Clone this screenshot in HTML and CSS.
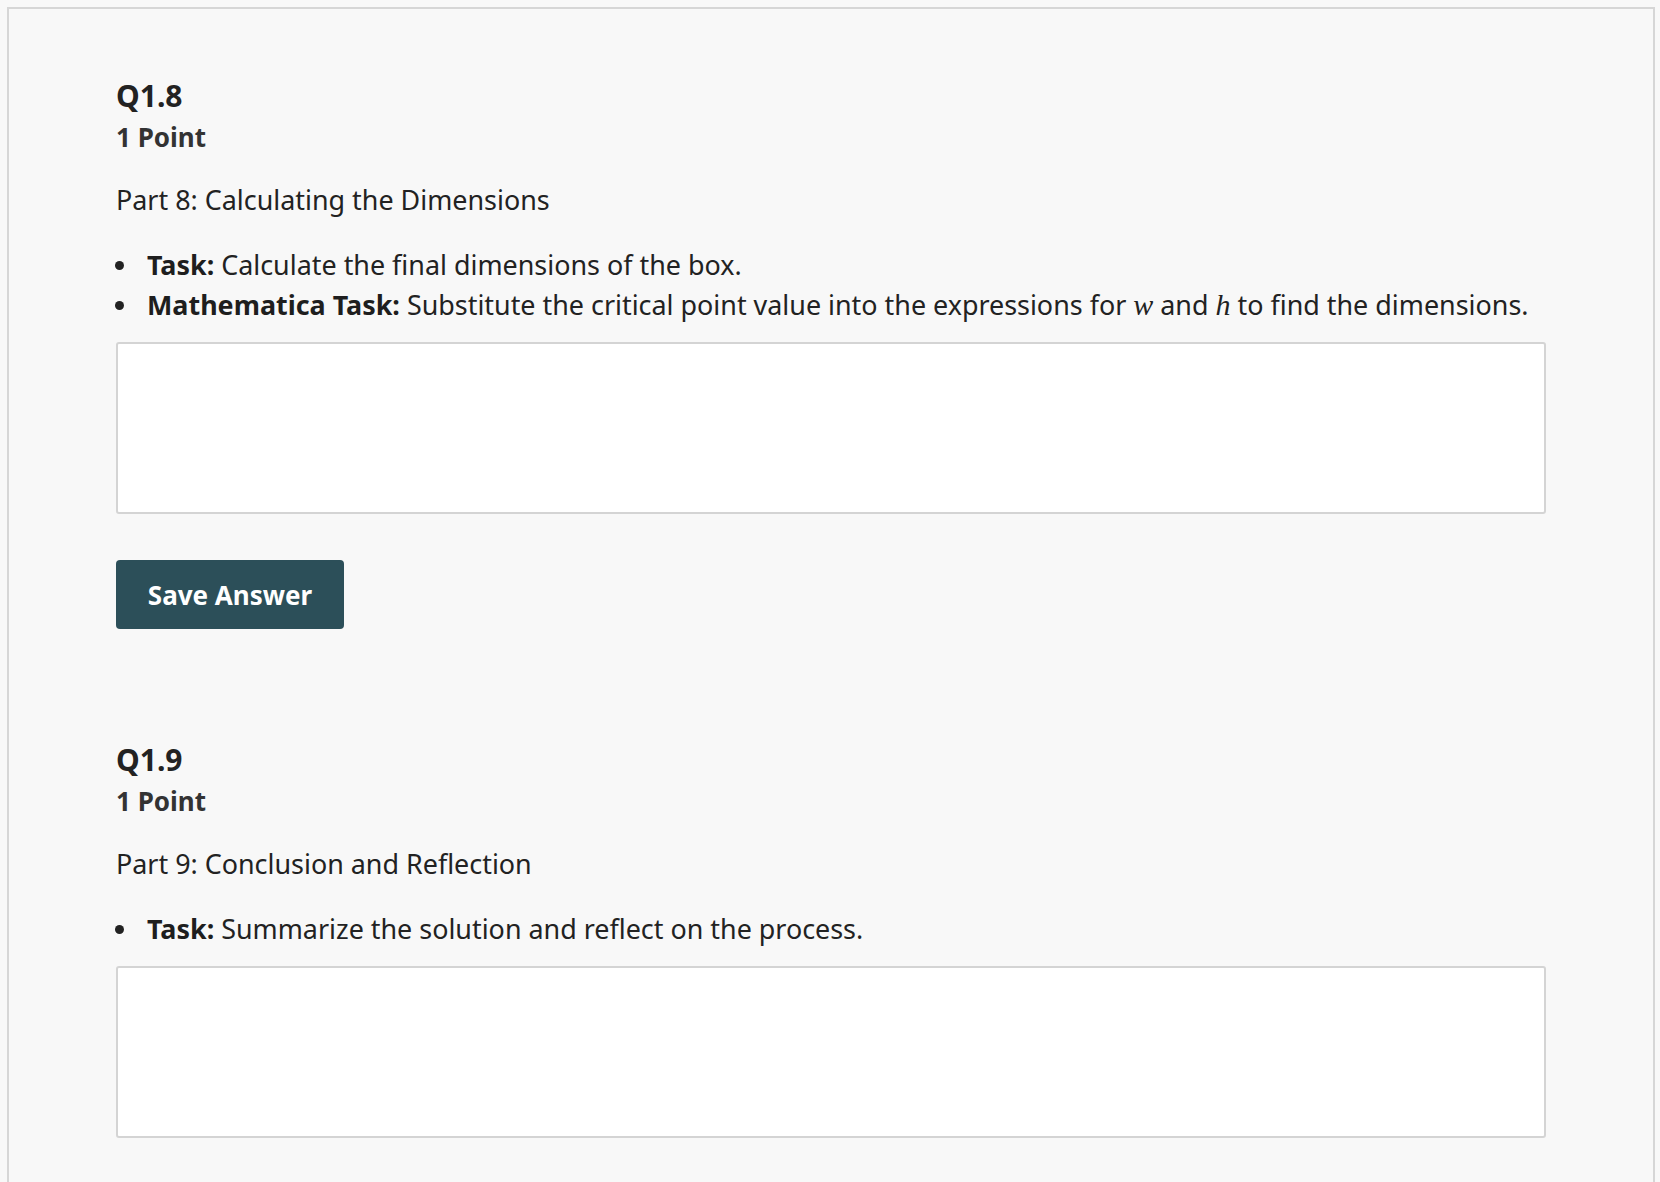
FILE: index.html
```html
<!DOCTYPE html>
<html lang="en">
<head>
    <meta charset="UTF-8">
    <meta name="viewport" content="width=device-width, initial-scale=1.0">
    <title>Assignment Questions</title>
    <link rel="stylesheet" href="styles.css">
</head>
<body>

    <div class="page">
        <div class="question-list">

            <div class="question">
                <h2>Q1.8</h2>
                <div class="points">1 Point</div>
                <p class="prompt">Part 8: Calculating the Dimensions</p>
                <ul class="tasks">
                    <li><strong>Task:</strong> Calculate the final dimensions of the box.</li>
                    <li><strong>Mathematica Task:</strong> Substitute the critical point value into the expressions for <span class="math">w</span> and <span class="math">h</span> to find the dimensions.</li>
                </ul>
                <textarea class="answer" aria-label="Answer for Q1.8"></textarea>
                <button type="button" class="save-btn">Save Answer</button>
            </div>

            <div class="question">
                <h2>Q1.9</h2>
                <div class="points">1 Point</div>
                <p class="prompt">Part 9: Conclusion and Reflection</p>
                <ul class="tasks">
                    <li><strong>Task:</strong> Summarize the solution and reflect on the process.</li>
                </ul>
                <textarea class="answer" aria-label="Answer for Q1.9"></textarea>
            </div>

        </div>
    </div>

</body>
</html>
```

FILE: styles.css
```css
html {
    background-color: #f8f8f8;
}

body {
    font-family: 'Noto Sans', 'Open Sans', sans-serif;
    margin: 0;
    padding: 0;
    color: #222;
    background-color: #f8f8f8;
}

.page {
    padding: 7px 0 0 7px;
}

.question-list {
    width: 1648px;
    box-sizing: border-box;
    min-height: 1200px;
    padding: 67px 107px 0;
    border: 2px solid #d6d6d6;
    border-bottom: none;
    background-color: #f8f8f8;
}

.question + .question {
    margin-top: 111px;
}

.question h2 {
    margin: 0;
    font-size: 30px;
    line-height: 40px;
    font-weight: 700;
    color: #222;
}

.points {
    margin-top: 1px;
    font-size: 26px;
    line-height: 40.8px;
    font-weight: 700;
    color: #333;
}

.prompt {
    margin: 22px 0 0;
    font-size: 26.9px;
    line-height: 40.8px;
}

.tasks {
    margin: 24px 0 0;
    padding-left: 31px;
    list-style: none;
    font-size: 26.9px;
    line-height: 40.8px;
}

.tasks li::before {
    content: "";
    display: inline-block;
    width: 9px;
    height: 9px;
    margin-left: -32px;
    margin-right: 23px;
    vertical-align: 5px;
    border-radius: 50%;
    background-color: #222;
}

.tasks strong {
    font-weight: 700;
    color: #1e1e1e;
}

.math {
    font-family: 'Liberation Serif', 'DejaVu Serif', serif;
    font-style: italic;
    font-size: 30px;
}

.answer {
    display: block;
    width: 100%;
    height: 172px;
    box-sizing: border-box;
    margin-top: 16px;
    padding: 10px;
    border: 2px solid #d4d4d4;
    border-radius: 3px;
    background-color: #fff;
    resize: none;
    font-family: inherit;
    font-size: 24px;
}

.save-btn {
    display: block;
    margin-top: 46px;
    width: 228px;
    height: 69px;
    padding: 0;
    border: none;
    border-radius: 4px;
    background-color: #2c4f59;
    color: #fff;
    font-family: 'Noto Sans', 'Open Sans', sans-serif;
    font-size: 26px;
    font-weight: 700;
    cursor: pointer;
}

.save-btn:hover {
    background-color: #234149;
}
```
